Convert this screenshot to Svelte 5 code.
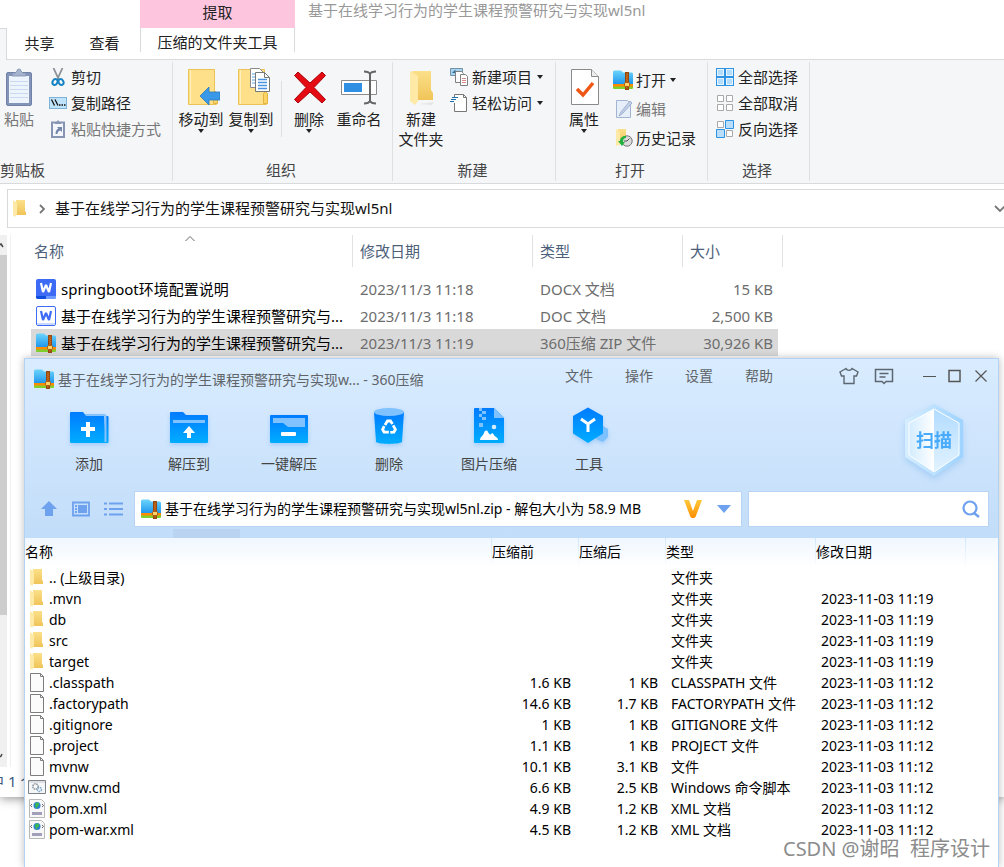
<script>
  const title = '基于在线学习行为的学生课程预警研究与实现wl5nl'

  const files = [
    { icon: 'docx', name: 'springboot环境配置说明', date: '2023/11/3 11:18', type: 'DOCX 文档', size: '15 KB' },
    { icon: 'doc', name: '基于在线学习行为的学生课程预警研究与...', date: '2023/11/3 11:18', type: 'DOC 文档', size: '2,500 KB' },
    { icon: 'zip', name: '基于在线学习行为的学生课程预警研究与...', date: '2023/11/3 11:19', type: '360压缩 ZIP 文件', size: '30,926 KB', selected: true }
  ]

  const tools = [
    { icon: 'add', label: '添加' },
    { icon: 'extract', label: '解压到' },
    { icon: 'quick', label: '一键解压' },
    { icon: 'trash', label: '删除' },
    { icon: 'image', label: '图片压缩' },
    { icon: 'tools', label: '工具' }
  ]

  const menus = ['文件', '操作', '设置', '帮助']

  const entries = [
    { icon: 'folder', name: '.. (上级目录)', before: '', after: '', type: '文件夹', date: '' },
    { icon: 'folder', name: '.mvn', before: '', after: '', type: '文件夹', date: '2023-11-03 11:19' },
    { icon: 'folder', name: 'db', before: '', after: '', type: '文件夹', date: '2023-11-03 11:19' },
    { icon: 'folder', name: 'src', before: '', after: '', type: '文件夹', date: '2023-11-03 11:19' },
    { icon: 'folder', name: 'target', before: '', after: '', type: '文件夹', date: '2023-11-03 11:19' },
    { icon: 'file', name: '.classpath', before: '1.6 KB', after: '1 KB', type: 'CLASSPATH 文件', date: '2023-11-03 11:12' },
    { icon: 'file', name: '.factorypath', before: '14.6 KB', after: '1.7 KB', type: 'FACTORYPATH 文件', date: '2023-11-03 11:12' },
    { icon: 'file', name: '.gitignore', before: '1 KB', after: '1 KB', type: 'GITIGNORE 文件', date: '2023-11-03 11:12' },
    { icon: 'file', name: '.project', before: '1.1 KB', after: '1 KB', type: 'PROJECT 文件', date: '2023-11-03 11:12' },
    { icon: 'file', name: 'mvnw', before: '10.1 KB', after: '3.1 KB', type: '文件', date: '2023-11-03 11:12' },
    { icon: 'cmd', name: 'mvnw.cmd', before: '6.6 KB', after: '2.5 KB', type: 'Windows 命令脚本', date: '2023-11-03 11:12' },
    { icon: 'xml', name: 'pom.xml', before: '4.9 KB', after: '1.2 KB', type: 'XML 文档', date: '2023-11-03 11:12' },
    { icon: 'xml', name: 'pom-war.xml', before: '4.5 KB', after: '1.2 KB', type: 'XML 文档', date: '2023-11-03 11:12' }
  ]

  let path = title + '.zip - 解包大小为 58.9 MB'
  let query = ''
</script>

{#snippet caret()}
  <svg width="8" height="4" viewBox="0 0 8 4"><path d="M1 0h6L4 4z" fill="#222" /></svg>
{/snippet}

{#snippet zipIcon()}
  <svg width="20" height="20" viewBox="0 0 20 20">
    <path d="M0 2a1.500 1.500 0 0 1 1.500-1.500H8l2 2h8.500A1.500 1.500 0 0 1 20 4v10H0z" fill="url(#zipBlue)" />
    <path d="M0 14h20v3H0z" fill="#ff8a00" />
    <path d="M0 16.500h20V18a1 1 0 0 1-1 1H1a1 1 0 0 1-1-1z" fill="#7fd02c" />
    <path d="M12 2h4v18h-4z" fill="#9b4a12" />
    <path d="M13 3h2v16h-2z" fill="#c4691d" stroke="#7a3608" stroke-width=".6" stroke-dasharray="1 1" />
    <rect x="11.500" y="12.500" width="5" height="4" rx="1" fill="#ffd46b" stroke="#a85a10" />
  </svg>
{/snippet}

{#snippet folderIcon()}
  <svg width="13" height="17" viewBox="0 0 13 17">
    <path d="M3 0h9v11l1 1v3H3z" fill="url(#folderGold)" />
    <path d="M0 0l4 3v11l-2 3-2-2z" fill="#ffe9a6" />
  </svg>
{/snippet}

{#snippet bigFolder()}
  <path d="M2.500 1.500h26v26l2 0v9h-28z" fill="#ffe08a" stroke="#eac258" />
  <path d="M4.500 2v34" stroke="#fff0bd" />
  <path d="M27.500 35.500v-10l2-2 2 2v10z" fill="#fbd466" stroke="#e2b443" />
{/snippet}

<svg class="defs" width="0" height="0" aria-hidden="true">
  <defs>
    <linearGradient id="zipBlue" x1="0" y1="0" x2="0" y2="1">
      <stop offset="0" stop-color="#6cd4fb" /><stop offset="1" stop-color="#1f97ef" />
    </linearGradient>
    <linearGradient id="folderGold" x1="0" y1="0" x2="0" y2="1">
      <stop offset="0" stop-color="#fbe08a" /><stop offset="1" stop-color="#f0c458" />
    </linearGradient>
    <linearGradient id="toolBlue" x1="0" y1="0" x2="0" y2="1">
      <stop offset="0" stop-color="#007bff" /><stop offset="1" stop-color="#00adff" />
    </linearGradient>
    <linearGradient id="vGold" x1="0" y1="0" x2="0" y2="1">
      <stop offset="0" stop-color="#ffc83a" /><stop offset="1" stop-color="#ff8e00" />
    </linearGradient>
    <linearGradient id="shieldEdge" x1="0" y1="0" x2="1" y2="0">
      <stop offset="0" stop-color="#d6eeff" /><stop offset="1" stop-color="#9ed3ff" />
    </linearGradient>
    <linearGradient id="shieldLeft" x1="0" y1="0" x2="1" y2="0">
      <stop offset="0" stop-color="#d3ecff" /><stop offset="1" stop-color="#fff" />
    </linearGradient>
    <linearGradient id="shieldRight" x1="0" y1="0" x2="0" y2="1">
      <stop offset="0" stop-color="#b2dcff" /><stop offset="1" stop-color="#e2f3ff" />
    </linearGradient>
  </defs>
</svg>

<div class="desktop">
  <section class="explorer">
    <header class="tabs">
      <span class="tab-stub"></span>
      <button class="tab">共享</button>
      <button class="tab">查看</button>
      <div class="context">
        <span class="context-name">提取</span>
        <button class="context-tab">压缩的文件夹工具</button>
      </div>
      <h1>{title}</h1>
    </header>

    <div class="ribbon">
      <div class="group clipboard">
        <div class="group-body">
          <button class="big paste muted">
            <svg width="28" height="38" viewBox="0 0 28 38">
              <rect x="1.500" y="4.500" width="25" height="33" rx="1.500" fill="#8494b8" stroke="#7082a8" />
              <path d="M4 8h20v27H4z" fill="#eef4fc" />
              <path d="M5 13.500h18M5 17.500h18M5 21.500h18M5 25.500h18M5 29.500h18" stroke="#c9d9ef" />
              <path d="M7 8V5h3l2-2a2 2 0 0 1 4 0l2 2h3v3z" fill="#a5b3cd" stroke="#7e8eae" stroke-width=".8" />
            </svg>
            <span>粘贴</span>
          </button>
          <div class="small-list">
            <button class="small">
              <svg width="18" height="18" viewBox="0 0 18 18">
                <path d="M4.500 0l5.500 12M13.500 0L8 12" stroke="#8b9097" stroke-width="1.800" fill="none" />
                <ellipse cx="6" cy="14" rx="2.300" ry="3" fill="none" stroke="#1683c4" stroke-width="2" transform="rotate(30 6 14)" />
                <ellipse cx="12" cy="14" rx="2.300" ry="3" fill="none" stroke="#1683c4" stroke-width="2" transform="rotate(-30 12 14)" />
              </svg>
              <span>剪切</span>
            </button>
            <button class="small">
              <svg width="18" height="18" viewBox="0 0 18 18">
                <rect x=".5" y="3.500" width="17" height="11" fill="#bfe3fb" stroke="#7fb2d8" />
                <path d="M2.500 5.500l3 6M6 5.500l3 6" stroke="#111" stroke-width="1.300" />
                <path d="M10 11h1.500M12.500 11H14M15 11h1.500" stroke="#111" stroke-width="1.400" />
              </svg>
              <span>复制路径</span>
            </button>
            <button class="small muted">
              <svg width="18" height="18" viewBox="0 0 18 18">
                <rect x="3" y="2.500" width="12" height="14.500" fill="#f3f7fc" stroke="#8795b5" stroke-width="2" />
                <path d="M6 4V2h1.500L9 0l1.500 2H12v2z" fill="#8795b5" />
                <path d="M6.500 14c0-3 1-4.500 3-5.500L8 7h5v5l-1.500-1.500c-2 .5-3 1.500-3 3.500z" fill="#7487ad" />
              </svg>
              <span>粘贴快捷方式</span>
            </button>
          </div>
        </div>
        <div class="group-name">剪贴板</div>
      </div>

      <div class="group organize">
        <div class="group-body">
          <button class="big">
            <svg width="38" height="38" viewBox="0 0 38 38">
              <g transform="translate(4)">{@render bigFolder()}</g>
              <path d="M18 28l9-9v5h11v8H27v5z" fill="#3a98e8" stroke="#2678bd" stroke-width=".8" />
            </svg>
            <span>移动到</span>
            {@render caret()}
          </button>
          <button class="big">
            <svg width="38" height="38" viewBox="0 0 38 38">
              <g transform="translate(4)">{@render bigFolder()}</g>
              <g transform="translate(1)">
                <path d="M17.500.500h9l4 4v15h-13z" fill="#fff" stroke="#8a8a8a" />
                <path d="M19 6h5M19 9h5M19 12h5M19 15h4" stroke="#5fa3e6" />
                <path d="M22.500 4.500h9l5 5v14h-14z" fill="#fff" stroke="#777" />
                <path d="M31.500 4.500v5h5" fill="none" stroke="#777" />
                <path d="M25 11.500h9M25 14.500h9M25 17.500h9M25 20.500h9" stroke="#4b93e0" stroke-width="1.300" />
              </g>
            </svg>
            <span>复制到</span>
            {@render caret()}
          </button>
          <span class="divider"></span>
          <button class="big">
            <svg width="38" height="38" viewBox="0 0 38 38">
              <path d="M8 4l12 11L32 4l3.500 3.500-11.500 12 11.500 12L32 35 20 24 8 35l-3.500-3.500 11.500-12-11.500-12z" fill="#e40b12" stroke="#a8060c" />
            </svg>
            <span>删除</span>
            {@render caret()}
          </button>
          <button class="big">
            <svg width="38" height="38" viewBox="0 0 38 38">
              <path d="M1.500 12.500h35v14h-35z" fill="#fff" stroke="#8b8b8b" />
              <path d="M4 15h18v9H4z" fill="#2f8fe2" />
              <path d="M24 3.500c3 0 5 .5 6 2.500v27c-1 2-3 2.500-6 2.500M36 3.500c-3 0-5 .5-6 2.500v27c1 2 3 2.500 6 2.500" fill="none" stroke="#666" stroke-width="2" />
            </svg>
            <span>重命名</span>
          </button>
        </div>
        <div class="group-name">组织</div>
      </div>

      <div class="group create">
        <div class="group-body">
          <button class="big">
            <svg width="38" height="38" viewBox="0 0 38 38">
              <path d="M10 3h19v19l2 3v7H12z" fill="url(#folderGold)" />
              <path d="M8 3l8 5v25l-3 4-5-4z" fill="#ffe9a6" />
              <path d="M17 36l15-2-2 3z" fill="#e5e5e5" />
            </svg>
            <span>新建</span>
            <span>文件夹</span>
          </button>
          <div class="small-list">
            <button class="small">
              <svg width="18" height="18" viewBox="0 0 18 18">
                <path d="M.5.500h12v7h-12z" fill="#a7d3ef" stroke="#7393a8" />
                <path d="M2 5l3-3 3 3z" fill="#2e6e95" />
                <path d="M5.500 3.500h6l2 2v9h-8z" fill="#fff" stroke="#808080" />
                <path d="M10.500 6.500h5l2 2v9h-7z" fill="#fff" stroke="#808080" />
                <path d="M12 10.500h4M12 12.500h4M12 14.500h4" stroke="#d88" />
              </svg>
              <span>新建项目</span>
              {@render caret()}
            </button>
            <button class="small">
              <svg width="18" height="18" viewBox="0 0 18 18">
                <path d="M4.500 3V.500h9l3 3v14h-12V9" fill="#fff" stroke="#777" />
                <path d="M13.500.500v3h3" fill="none" stroke="#777" />
                <path d="M2 3.500h6M1 5.500h5M0 7.500h4" stroke="#1d6fae" />
              </svg>
              <span>轻松访问</span>
              {@render caret()}
            </button>
          </div>
        </div>
        <div class="group-name">新建</div>
      </div>

      <div class="group open">
        <div class="group-body">
          <button class="big">
            <svg width="38" height="38" viewBox="0 0 38 38">
              <path d="M6.500 1.500h20l7 7v28h-27z" fill="#fff" stroke="#8a8a8a" />
              <path d="M26.500 1.500v7h7" fill="#eee" stroke="#8a8a8a" />
              <path d="M12 21l6 6 10-12" fill="none" stroke="#ee5614" stroke-width="3.500" />
            </svg>
            <span>属性</span>
            {@render caret()}
          </button>
          <div class="small-list wide">
            <button class="small">
              {@render zipIcon()}
              <span>打开</span>
              {@render caret()}
            </button>
            <button class="small muted">
              <svg width="20" height="20" viewBox="0 0 20 20">
                <path d="M3.500 1.500h11l3 3v14h-14z" fill="#e6eefa" stroke="#a3b4d2" />
                <path d="M6 17l2-4L17 2l2 2-9 10z" fill="#c3d0e8" stroke="#92a5c8" stroke-width=".8" />
              </svg>
              <span>编辑</span>
            </button>
            <button class="small">
              <svg width="20" height="20" viewBox="0 0 20 20">
                <path d="M5 1h8v15H5z" fill="url(#folderGold)" />
                <path d="M3 1l4 3v13l-4 1z" fill="#ffe9a6" />
                <circle cx="14" cy="13" r="5.200" fill="#dcdcdc" stroke="#777" />
                <path d="M14 13l2.500-2.500M14 13h-3" stroke="#555" />
                <path d="M13 8c-4 0-6 2-6 5H5l4 5 3-4h-2c0-3 1-4 3-4z" fill="#22b03e" />
              </svg>
              <span>历史记录</span>
            </button>
          </div>
        </div>
        <div class="group-name">打开</div>
      </div>

      <div class="group select">
        <div class="group-body">
          <div class="small-list">
            <button class="small">
              <svg width="18" height="18" viewBox="0 0 18 18">
                <path d="M0 0h18v18H0z" fill="#2f93e4" />
                <path d="M1 1h7v7H1zM10 1h7v7h-7zM1 10h7v7H1zM10 10h7v7h-7z" fill="#e6f4ff" />
                <path d="M2 2h5v5H2zM11 2h5v5h-5zM2 11h5v5H2zM11 11h5v5h-5z" fill="#b4ddfb" />
              </svg>
              <span>全部选择</span>
            </button>
            <button class="small">
              <svg width="18" height="18" viewBox="0 0 18 18">
                <path d="M1.500 1.500h6v6h-6zM10.500 1.500h6v6h-6zM1.500 10.500h6v6h-6zM10.500 10.500h6v6h-6z" fill="#fff" stroke="#a9a9a9" />
              </svg>
              <span>全部取消</span>
            </button>
            <button class="small">
              <svg width="18" height="18" viewBox="0 0 18 18">
                <path d="M1.500 1.500h6v6h-6zM10.500 10.500h6v6h-6z" fill="#fff" stroke="#a9a9a9" />
                <path d="M9.500.500h8v8h-8zM.500 9.500h8v8h-8z" fill="#b9defb" stroke="#2f93e4" />
              </svg>
              <span>反向选择</span>
            </button>
          </div>
        </div>
        <div class="group-name">选择</div>
      </div>
    </div>

    <nav class="address">
      {@render folderIcon()}
      <svg width="8" height="10" viewBox="0 0 8 10"><path d="M2 1l4 4-4 4" fill="none" stroke="#777" stroke-width="1.800" /></svg>
      <a href="#path">{title}</a>
      <svg class="address-drop" width="12" height="8" viewBox="0 0 12 8"><path d="M1 1l5 5 5-5" fill="none" stroke="#777" stroke-width="1.800" /></svg>
    </nav>

    <div class="content">
      <div class="scrollbar">
        <svg width="7" height="20" viewBox="0 0 7 20"><path d="M0 10l1-1 2 3" stroke="#444" stroke-width="1.500" fill="none" /></svg>
        <span class="thumb"></span>
        <svg width="7" height="20" viewBox="0 0 7 20"><path d="M0 10l1-1 1-2" stroke="#444" stroke-width="1.500" fill="none" /></svg>
      </div>
      <div class="listing">
        <table class="files">
          <colgroup><col class="c-name" /><col class="c-date" /><col class="c-type" /><col class="c-size" /></colgroup>
          <thead>
            <tr>
              <th>
                <span>名称</span>
                <svg class="sort" width="10" height="6" viewBox="0 0 10 6"><path d="M.5 5L5 .5 9.500 5" fill="none" stroke="#666" /></svg>
              </th>
              <th><span>修改日期</span></th>
              <th><span>类型</span></th>
              <th><span>大小</span></th>
            </tr>
          </thead>
          <tbody>
            {#each files as file}
              <tr class:selected={file.selected}>
                <td>
                  <div class="file-name">
                    {#if file.icon === 'zip'}
                      {@render zipIcon()}
                    {:else if file.icon === 'docx'}
                      <svg width="20" height="20" viewBox="0 0 20 20">
                        <rect width="20" height="20" rx="2" fill="#3d6bf5" />
                        <path d="M0 17h10v3H2a2 2 0 0 1-2-2z" fill="#0f4fe0" />
                        <path d="M10 17h10v1a2 2 0 0 1-2 2h-8z" fill="#6d9bff" />
                        <path d="M5 4l2 9 3-7 3 7 2-9" fill="none" stroke="#fff" stroke-width="2.200" stroke-linejoin="bevel" />
                      </svg>
                    {:else}
                      <svg width="20" height="20" viewBox="0 0 20 20">
                        <rect x=".5" y=".5" width="19" height="19" rx="1.500" fill="#fff" stroke="#3d6bf5" />
                        <path d="M1 17h18v2H1z" fill="#c9d8ff" />
                        <path d="M5 5l2 9 3-7 3 7 2-9" fill="none" stroke="#3d6bf5" stroke-width="2.200" stroke-linejoin="bevel" />
                      </svg>
                    {/if}
                    <span>{file.name}</span>
                  </div>
                </td>
                <td>{file.date}</td>
                <td>{file.type}</td>
                <td class="num">{file.size}</td>
              </tr>
            {/each}
          </tbody>
        </table>
      </div>
    </div>
    <footer class="status"><span>中 1 个</span></footer>
  </section>

  <section class="archive">
    <div class="skin">
      <header class="titlebar">
        {@render zipIcon()}
        <h2>基于在线学习行为的学生课程预警研究与实现w... - 360压缩</h2>
        <nav class="menus">
          {#each menus as menu}
            <button>{menu}</button>
          {/each}
        </nav>
        <div class="extras">
          <button aria-label="皮肤">
            <svg width="20" height="20" viewBox="0 0 20 20"><path d="M7 2.500L1 6l1.500 4H5v7.500h10V10h2.500L19 6l-6-3.500c-1 2.500-5 2.500-6 0z" fill="none" stroke="#5c6670" stroke-width="1.400" /></svg>
          </button>
          <button aria-label="反馈">
            <svg width="20" height="20" viewBox="0 0 20 20"><path d="M1.500 3.500h17v12H12l-2 2-2-2H1.500z" fill="none" stroke="#5c6670" stroke-width="1.500" /><path d="M5.500 7.500h9M5.500 11h6" stroke="#5c6670" stroke-width="1.300" /></svg>
          </button>
        </div>
        <div class="controls">
          <button aria-label="最小化">
            <svg width="14" height="14" viewBox="0 0 14 14"><path d="M1 7.500h13" stroke="#555" /></svg>
          </button>
          <button aria-label="最大化">
            <svg width="14" height="14" viewBox="0 0 14 14"><path d="M1 1.500h11v11H1z" fill="none" stroke="#555" stroke-width="1.500" /></svg>
          </button>
          <button aria-label="关闭">
            <svg width="14" height="14" viewBox="0 0 14 14"><path d="M1.500 1.500l11 11M12.500 1.500l-11 11" stroke="#555" stroke-width="1.200" /></svg>
          </button>
        </div>
      </header>

      <div class="toolbar">
        {#each tools as tool}
          <button class="tool">
            <svg width="40" height="40" viewBox="0 0 40 40">
              {#if tool.icon === 'add'}
                <path d="M36 11h2.500a1 1 0 0 1 1 1v25a1 1 0 0 1-1 1H34z" fill="url(#toolBlue)" />
                <path d="M16 10h19a1.500 1.500 0 0 1 1.500 1.500V37" fill="none" stroke="#86c3fb" stroke-width="2" />
                <path d="M1 8a1 1 0 0 1 1-1h12l3 4h18v27H2a1 1 0 0 1-1-1z" fill="url(#toolBlue)" />
                <path d="M17 17h4v5h5v4h-5v6h-4v-6h-5v-4h5z" fill="#fff" />
              {:else if tool.icon === 'extract'}
                <path d="M1 8a1 1 0 0 1 1-1h12l3 3h21a1 1 0 0 1 1 1v26a1 1 0 0 1-1 1H2a1 1 0 0 1-1-1z" fill="url(#toolBlue)" />
                <path d="M4 18v-3h32v3z" fill="#80c2ff" />
                <path d="M20 21l6 7h-4v5h-4v-5h-4z" fill="#fff" />
              {:else if tool.icon === 'quick'}
                <rect x="1" y="10" width="38" height="28" rx="1" fill="url(#toolBlue)" />
                <path d="M4 13h32v9H19l-5-4H4z" fill="#80c2ff" />
                <rect x="12" y="27" width="15" height="4" rx="1" fill="#fff" />
              {:else if tool.icon === 'trash'}
                <path d="M5 7h30l-2 30c-4 2.500-22 2.500-26 0z" fill="url(#toolBlue)" />
                <ellipse cx="20" cy="7" rx="15" ry="4" fill="#80c2ff" />
                <g fill="none" stroke="#fff" stroke-width="2.800">
                  <path d="M16 20l2.500-4h3l2 3" />
                  <path d="M16 20l2.500-4h3l2 3" transform="rotate(120 20 22.500)" />
                  <path d="M16 20l2.500-4h3l2 3" transform="rotate(240 20 22.500)" />
                </g>
              {:else if tool.icon === 'image'}
                <path d="M5 4a1 1 0 0 1 1-1h19l10 10v24a1 1 0 0 1-1 1H6a1 1 0 0 1-1-1z" fill="url(#toolBlue)" />
                <path d="M25 3l10 10H25z" fill="#80c2ff" />
                <path d="M10 3h3v3h-3zM13 6h4v3h-4zM10 9h3v3h-3zM13 12h4v3h-4zM10 18h4v4h-4z" fill="#80c2ff" />
                <circle cx="25" cy="22" r="2.300" fill="#d6ecff" />
                <path d="M11 35c0-3 3-4 4-7s3-3 4-1 2 3 3 2 2-1 3 1 4 2 4 5z" fill="#fff" />
              {:else}
                <path d="M29 21l5 0 5 3v8l-5 5-7-3z" fill="#7cc0fd" />
                <path d="M19 2.500l15 8.500v17.500L19 38 4 28.500V11z" fill="url(#toolBlue)" />
                <path d="M12 14l7 5 7-5M19 18v9" fill="none" stroke="#fff" stroke-width="3" />
              {/if}
            </svg>
            <span>{tool.label}</span>
          </button>
        {/each}
        <button class="scan">
          <svg width="60" height="74" viewBox="0 0 60 74">
            <path d="M30 1l29 16v37L30 73 1 54V17z" fill="url(#shieldEdge)" />
            <path d="M30 6L5 20v32l25 17z" fill="url(#shieldLeft)" />
            <path d="M30 6l25 14v32L30 69z" fill="url(#shieldRight)" />
            <path d="M30 6l25 14v32L30 69 5 52V20z" fill="none" stroke="#fff" />
          </svg>
          <span>扫描</span>
        </button>
      </div>

      <div class="location">
        <button aria-label="上级目录">
          <svg width="18" height="18" viewBox="0 0 18 18"><path d="M9 1l8 8h-4v7H5V9H1z" fill="#6ea1ee" /></svg>
        </button>
        <button aria-label="缩略图">
          <svg width="18" height="18" viewBox="0 0 18 18"><path d="M1 2.500h16v13H1z" fill="none" stroke="#6ea1ee" stroke-width="1.800" /><path d="M3 5h2v2H3zM3 8h2v2H3zM3 11h2v2H3zM6 5h9v8H6z" fill="#6ea1ee" /></svg>
        </button>
        <button aria-label="列表">
          <svg width="19" height="18" viewBox="0 0 19 18"><path d="M0 3.500h3M5 3.500h14M0 9h3M5 9h14M0 14.500h3M5 14.500h14" stroke="#6ea1ee" stroke-width="2" /></svg>
        </button>
        <div class="path-box">
          {@render zipIcon()}
          <input aria-label="路径" bind:value={path} />
          <svg width="20" height="18" viewBox="0 0 20 18"><path d="M1 0h5l4 11 4-11h5l-6.500 17c-1 1.500-4 1.500-5 0z" fill="url(#vGold)" /></svg>
          <svg class="drop" width="14" height="8" viewBox="0 0 14 8"><path d="M0 0h14L7 8z" fill="#6ea1ee" /></svg>
        </div>
        <div class="search-box">
          <input aria-label="搜索" bind:value={query} />
          <svg width="20" height="20" viewBox="0 0 20 20"><circle cx="9" cy="9" r="6.500" fill="none" stroke="#6ea1ee" stroke-width="2.200" /><path d="M13 14l5 4" stroke="#6ea1ee" stroke-width="2.500" /></svg>
        </div>
      </div>
    </div>

    <table class="entries">
      <colgroup><col class="e-name" /><col class="e-size" /><col class="e-size" /><col class="e-type" /><col class="e-type" /><col /></colgroup>
      <thead>
        <tr><th>名称</th><th>压缩前</th><th>压缩后</th><th>类型</th><th>修改日期</th><th></th></tr>
      </thead>
      <tbody>
        {#each entries as entry}
          <tr>
            <td>
              <div class="entry-name">
                <span class="entry-icon">
                  {#if entry.icon === 'folder'}
                    {@render folderIcon()}
                  {:else if entry.icon === 'file'}
                    <svg width="18" height="19" viewBox="0 0 18 19">
                      <path d="M2.500.500h10l3 3v15h-13z" fill="#fbfbfb" stroke="#7d7d7d" />
                      <path d="M12.500.500v3h3" fill="none" stroke="#7d7d7d" />
                    </svg>
                  {:else if entry.icon === 'cmd'}
                    <svg width="18" height="19" viewBox="0 0 18 19">
                      <path d="M.5 2.500h17v13H.5z" fill="#f4f6f8" stroke="#7d8288" />
                      <path d="M1 4h16" stroke="#c4c9ce" />
                      <circle cx="7.500" cy="8.500" r="2.700" fill="none" stroke="#8c949c" stroke-width="1.500" stroke-dasharray="1.500 .7" />
                      <circle cx="11.500" cy="11.500" r="2" fill="none" stroke="#7fa9c9" stroke-width="1.500" stroke-dasharray="1.500 .7" />
                    </svg>
                  {:else}
                    <svg width="18" height="19" viewBox="0 0 18 19">
                      <path d="M1.500.500h12l3 3v15h-15z" fill="#f7f7f7" stroke="#b9b9b9" />
                      <circle cx="9" cy="6.500" r="3.500" fill="#2d7fd6" />
                      <path d="M7 5c2-3 5-1 4 1s-2 1-2 3-2-1-2-4z" fill="#3db74f" />
                      <path d="M4 5L2.500 6.500 4 8M14 5l1.500 1.500L14 8" fill="none" stroke="#666" />
                      <path d="M4 13h10v3H4z" fill="#a29fba" />
                    </svg>
                  {/if}
                </span>
                <span>{entry.name}</span>
              </div>
            </td>
            <td class="num">{entry.before}</td>
            <td class="num">{entry.after}</td>
            <td>{entry.type}</td>
            <td>{entry.date}</td>
            <td></td>
          </tr>
        {/each}
      </tbody>
    </table>
  </section>

  <div class="watermark">CSDN @谢昭&nbsp; 程序设计</div>
</div>

<style>
  :global(body) {
    margin: 0;
    background: #fff;
  }

  .desktop {
    position: relative;
    display: flex;
    flex-direction: column;
    min-height: 100vh;
    box-sizing: border-box;
    padding-bottom: 70px;
    overflow: hidden;
    font-family: 'Noto Sans', 'Noto Sans CJK SC', sans-serif;
    font-size: 15px;
    line-height: 20px;
    color: #222;
  }

  .defs {
    position: absolute;
  }

  svg {
    display: block;
    flex: none;
  }

  button {
    border: 0;
    padding: 0;
    background: none;
    color: inherit;
    font: inherit;
    white-space: nowrap;
  }

  h1, h2 {
    margin: 0;
    font-size: inherit;
    font-weight: 400;
  }

  /* explorer window */
  .explorer {
    flex: 1;
    display: flex;
    flex-direction: column;
    background: #fff;
    box-shadow: 0 1px 10px #0007;
  }

  .tabs {
    display: flex;
    align-items: flex-end;
    height: 59px;
    border-bottom: 1px solid #d9dadb;
  }

  .tab-stub {
    width: 6px;
    height: 31px;
    margin-bottom: -1px;
    border-top: 1px solid #d9dadb;
    border-right: 1px solid #d9dadb;
    background: #f5f6f7;
  }

  .tab {
    width: 65px;
    height: 31px;
    padding-bottom: 2px;
  }

  .context {
    display: flex;
    flex-direction: column;
    align-self: stretch;
    width: 155px;
    margin: 0 13px 0 3px;
  }

  .context-name {
    height: 28px;
    line-height: 24px;
    background: #fec5df;
    text-align: center;
  }

  .context-tab {
    height: 24px;
    padding-top: 4px;
    border-left: 1px solid #d9dadb;
    border-right: 1px solid #d9dadb;
  }

  h1 {
    align-self: flex-start;
    color: #999;
  }

  .ribbon {
    display: flex;
    height: 119px;
    padding: 2px 0;
    border-bottom: 1px solid #d9dadb;
    background: #f5f6f8;
  }

  .group {
    display: flex;
    flex-direction: column;
    justify-content: space-between;
    border-right: 1px solid #dfe0e2;
  }

  .group-body {
    display: flex;
    gap: 4px;
    padding: 0 11px 0 3px;
  }

  .clipboard .group-body {
    gap: 11px;
    padding-left: 0;
  }

  .organize .group-body {
    gap: 0;
    padding-right: 8px;
  }

  .select .group-body {
    padding-left: 8px;
  }

  .group-name {
    padding: 0 3px 1px 0;
    text-align: center;
    color: #444;
  }

  .clipboard .group-name {
    text-align: left;
  }

  .big {
    display: flex;
    flex-direction: column;
    align-items: center;
    width: 50px;
    padding-top: 6px;
  }

  .big svg + span {
    margin-top: 3px;
  }

  .big.paste {
    width: 38px;
  }

  .muted {
    color: #777;
  }

  .divider {
    width: 1px;
    height: 56px;
    margin: 19px 2px 0 5px;
    background: #dfe0e2;
  }

  .small-list {
    display: flex;
    flex-direction: column;
    gap: 6px;
    padding-top: 5px;
  }

  .small {
    display: flex;
    align-items: center;
    gap: 4px;
    height: 20px;
  }

  .small-list.wide {
    gap: 9px;
    padding-top: 8px;
  }

  .wide .small {
    gap: 3px;
  }

  .address {
    display: flex;
    align-items: center;
    height: 37px;
    margin: 5px 0 0 7px;
    padding-left: 5px;
    border: 1px solid #d9d9d9;
    border-right: 0;
  }

  .address svg + svg {
    margin: 0 9px 0 12px;
  }

  .address a {
    padding-bottom: 2px;
    color: #111;
    text-decoration: none;
  }

  .address .address-drop {
    margin: 0 -2px 0 auto;
  }

  .content {
    flex: 1;
    display: flex;
    margin-top: 7px;
  }

  .scrollbar {
    display: flex;
    flex-direction: column;
    width: 7px;
    margin-right: 3px;
    background: #f0f0f0;
  }

  .thumb {
    height: 360px;
    margin-bottom: auto;
    background: #cdcdcd;
  }

  .listing {
    flex: 1;
    padding-left: 20px;
    border-left: 1px solid #f0f0f0;
  }

  table {
    table-layout: fixed;
    border-spacing: 0;
    border-collapse: separate;
  }

  th, td {
    padding: 0;
    font-weight: 400;
    text-align: left;
    white-space: nowrap;
  }

  .files {
    width: 752px;
  }

  .c-name { width: 322px; }
  .c-date { width: 180px; }
  .c-type { width: 150px; }
  .c-size { width: 100px; }

  .files th {
    position: relative;
    height: 40px;
    vertical-align: top;
    color: #4c607a;
  }

  .files th span {
    display: block;
    height: 32px;
    padding-left: 7px;
    border-right: 1px solid #e2e2e2;
    line-height: 32px;
  }

  .files th:first-child span {
    padding-left: 3px;
  }

  .sort {
    position: absolute;
    top: 1px;
    left: calc(50% - 7px);
  }

  .files td {
    height: 27px;
    padding-left: 7px;
    color: #6d6d6d;
    background-clip: padding-box;
  }

  .files td:first-child {
    padding-left: 5px;
    color: #000;
  }

  .files td:last-child {
    padding-right: 5px;
    border-right: 5px solid transparent;
  }

  .selected td {
    background-color: #d9d9d9;
  }

  .file-name {
    display: flex;
    align-items: center;
    gap: 5px;
  }

  td.num {
    text-align: right;
  }

  .status {
    height: 30px;
    overflow: hidden;
    line-height: 28px;
    color: #3c5a80;
  }

  .status span {
    margin-left: -11px;
  }

  /* archive window */
  .archive {
    position: absolute;
    top: 358px;
    right: 5px;
    bottom: 0;
    left: 24px;
    border: 1px solid #b4d3f2;
    border-bottom: 0;
    background: #fff;
    box-shadow: 0 0 8px #0004;
    font-size: 14px;
  }

  .skin {
    padding-bottom: 11px;
    background:
      linear-gradient(#b9d3f1, #b9d3f1) 148px 100% / 67px 9px no-repeat,
      linear-gradient(#d9ecff, #cfe5fd 45%, #c2ddf9);
    color: #444;
  }

  .titlebar {
    display: flex;
    align-items: center;
    height: 34px;
    padding: 0 10px 0 9px;
    color: #5f6468;
  }

  .titlebar > :global(svg) {
    margin-top: 6px;
  }

  h2 {
    margin: 8px auto 0 4px;
  }

  .menus {
    display: flex;
    gap: 32px;
  }

  .extras {
    display: flex;
    gap: 15px;
    margin: 0 28px 0 66px;
  }

  .controls {
    display: flex;
    gap: 12px;
  }

  .toolbar {
    display: flex;
    align-items: flex-start;
    height: 86px;
    padding: 12px 34px 0 14px;
  }

  .tool {
    display: flex;
    flex-direction: column;
    align-items: center;
    gap: 9px;
    width: 100px;
  }

  .tool svg {
    filter: drop-shadow(0 2px 2px #4a9cf055);
  }

  .scan {
    display: grid;
    place-items: center;
    margin: -2px 0 0 auto;
    color: #48aafa;
    font-size: 18px;
    font-weight: 700;
    filter: drop-shadow(0 3px 3px #6ab0ee66);
  }

  .scan > * {
    grid-area: 1 / 1;
  }

  .location {
    display: flex;
    align-items: center;
    gap: 14px;
    padding: 0 9px 0 15px;
  }

  .path-box, .search-box {
    display: flex;
    align-items: center;
    box-sizing: border-box;
    height: 36px;
    border: 1px solid #b7d4f4;
    background: #fff;
  }

  .path-box {
    flex: 1;
    margin-left: -3px;
    padding: 0 10px 0 6px;
  }

  .search-box {
    width: 241px;
    margin-left: -8px;
    padding: 0 7px;
  }

  .drop {
    margin-left: 14px;
  }

  input {
    flex: 1;
    min-width: 0;
    padding: 0 4px;
    border: 0;
    outline: 0;
    background: none;
    color: #000;
    font: inherit;
  }

  .entries {
    width: 100%;
    color: #000;
  }

  .e-name { width: 466px; }
  .e-size { width: 87px; }
  .e-type { width: 150px; }

  .entries th {
    height: 27px;
    padding-bottom: 2px;
    background: linear-gradient(#f0f7ff, #fff);
  }

  .entries th + th {
    border-left: 1px solid;
    border-image: linear-gradient(#cfe5fa, #fff) 1;
  }

  .entries td {
    height: 21px;
    padding: 0 7px 0 6px;
  }

  .entries td:first-child {
    padding: 0 0 0 3px;
  }

  .entry-name {
    display: flex;
    align-items: center;
    gap: 3px;
  }

  .entry-icon {
    display: flex;
    width: 18px;
  }

  .entry-icon :global(svg[width='13']) {
    margin-left: 2px;
  }

  .watermark {
    position: absolute;
    right: 14px;
    bottom: 8px;
    color: #8c8c8c;
    font-size: 20px;
    line-height: 20px;
  }
</style>
